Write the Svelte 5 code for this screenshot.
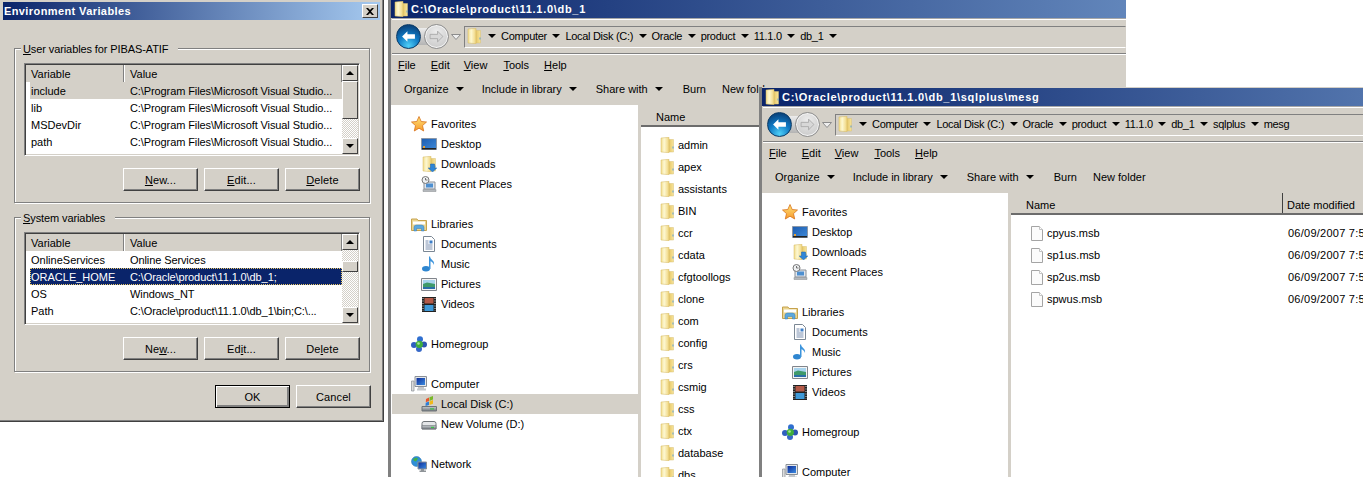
<script>
  // Three overlapping windows: the env vars dialog and two explorer windows
  const userVars = [
    ['include', 'C:\\Program Files\\Microsoft Visual Studio...'],
    ['lib', 'C:\\Program Files\\Microsoft Visual Studio...'],
    ['MSDevDir', 'C:\\Program Files\\Microsoft Visual Studio...'],
    ['path', 'C:\\Program Files\\Microsoft Visual Studio...'],
    ['temp', 'C:\\Users\\Administrator\\AppData\\Local\\Temp']
  ];
  const sysVars = [
    ['OnlineServices', 'Online Services'],
    ['ORACLE_HOME', 'C:\\Oracle\\product\\11.1.0\\db_1;'],
    ['OS', 'Windows_NT'],
    ['Path', 'C:\\Oracle\\product\\11.1.0\\db_1\\bin;C:\\...']
  ];

  const nav = [
    { label: 'Favorites', icon: 'star', top: true },
    { label: 'Desktop', icon: 'desktop' },
    { label: 'Downloads', icon: 'downloads' },
    { label: 'Recent Places', icon: 'recent' },
    { gap: true },
    { label: 'Libraries', icon: 'libraries', top: true },
    { label: 'Documents', icon: 'documents' },
    { label: 'Music', icon: 'music' },
    { label: 'Pictures', icon: 'pictures' },
    { label: 'Videos', icon: 'videos' },
    { gap: true },
    { label: 'Homegroup', icon: 'homegroup', top: true },
    { gap: true },
    { label: 'Computer', icon: 'computer', top: true },
    { label: 'Local Disk (C:)', icon: 'disk', active: true },
    { label: 'New Volume (D:)', icon: 'volume' },
    { gap: true },
    { label: 'Network', icon: 'network', top: true }
  ];

  const folders = ['admin', 'apex', 'assistants', 'BIN', 'ccr', 'cdata', 'cfgtoollogs', 'clone', 'com', 'config', 'crs', 'csmig', 'css', 'ctx', 'database', 'dbs'];
  const files = ['cpyus.msb', 'sp1us.msb', 'sp2us.msb', 'spwus.msb'];
</script>

{#snippet icon(name)}
  <svg class="icon" viewBox="0 0 16 16" width="16" height="16">
    {#if name === 'folder' || name === 'downloads'}
      <path d="M10 2.500h4.500V15H10z" fill="url(#fold2)" stroke="#d8c074" stroke-width=".5" />
      <path d="M2 1 10 .3v15.400L2 15z" fill="url(#fold)" stroke="#d4b862" stroke-width=".5" />
      <path d="M13.500 9.500h1v2h-1z" fill="#5b9fd8" />
      {#if name === 'downloads'}
        <path d="M9.500 8h4v4h2.300L11.500 16 7.200 12h2.300z" fill="#2f86d8" stroke="#1a5ea8" stroke-width=".5" />
      {/if}
    {:else if name === 'file'}
      <path d="M2.500 1.500h8l3 3v11h-11z" fill="#fbfbfb" stroke="#a4a4a4" />
      <path d="M10.500 1.500v3h3" fill="#fff" stroke="#c4c4c4" />
    {:else if name === 'star'}
      <path d="M8 .5l2.200 5 5.300.5-4 3.600 1.200 5.400L8 12.200 3.300 15l1.200-5.400-4-3.600 5.300-.5z" fill="url(#star)" stroke="#d8721c" stroke-width=".8" />
    {:else if name === 'desktop'}
      <path d="M.5 2.500h15v11H.5z" fill="url(#screen)" stroke="#8a97a8" />
      <path d="M1 12h14v1.500H1z" fill="#222" />
      <path d="M2 10h2v2H2z" fill="#e8a030" />
    {:else if name === 'recent'}
      <path d="M3 6h11v7H3z" fill="#dfe6ee" stroke="#8a8f96" />
      <path d="M5 7.500h7v4H5z" fill="#4d8fd0" />
      <path d="M2 13.500h13v2H2z" fill="#b4b8bc" stroke="#85888c" stroke-width=".5" />
      <circle cx="4.500" cy="4" r="3.500" fill="#eef0f2" stroke="#777" />
      <path d="M4.500 2v2h2" fill="none" stroke="#555" stroke-width=".8" />
    {:else if name === 'libraries'}
      <path d="M.5 3V14.500h15V4.500H7L6 3z" fill="#ead591" stroke="#c6a24c" />
      <path d="M2 5.500h12v3H2z" fill="#fff" />
      <path d="M3 15v-3.500q0-2.500 2.500-2.500h5q2.500 0 2.500 2.500V15h-2.500v-2.500h-5V15z" fill="#5ba8de" stroke="#3a7db8" stroke-width=".5" />
    {:else if name === 'documents'}
      <path d="M2.500.5h8l3 3v12h-11z" fill="#fff" stroke="#7b8794" />
      <path d="M4.500 5h3M4.500 7h3M4.500 9h7M4.500 11h7M4.500 13h7" stroke="#7a8fb0" />
      <path d="M8.500 4.500h3v3h-3z" fill="#3f7fc8" />
    {:else if name === 'music'}
      <ellipse cx="5" cy="12.800" rx="4" ry="2.700" fill="#2f86d0" />
      <path d="M8 13V1l1-1c0 4 5 4 4 9-.8-3-2.800-3.500-3.500-3.800V13z" fill="#3c94dc" />
    {:else if name === 'pictures'}
      <path d="M.5 2.500h15v12H.5z" fill="#f4f4f4" stroke="#80858c" />
      <path d="M2 4h12v4H2z" fill="#a8d4ee" />
      <path d="M2 8l4-1.500L14 8v3H2z" fill="#3f9a6a" />
      <path d="M2 11h12v2H2z" fill="#2a6fa8" />
    {:else if name === 'videos'}
      <path d="M1 1h14v15H1z" fill="#222" />
      <path d="M3.500 2h9v5.500h-9z" fill="#b45a48" />
      <path d="M3.500 9h9v6h-9z" fill="#3f9ad8" />
      <path d="M2 2v13M14 2v13" stroke="#ddd" stroke-dasharray="1 1.500" />
    {:else if name === 'homegroup'}
      <circle cx="3" cy="9" r="3" fill="#2f5fc0" />
      <circle cx="9" cy="3.200" r="3" fill="#2f6fd0" />
      <circle cx="13" cy="8.500" r="3" fill="#2c55b0" />
      <circle cx="8" cy="13" r="3" fill="#3668c8" />
      <circle cx="8.300" cy="8.300" r="3.600" fill="#3fae3c" />
      <circle cx="7.500" cy="7.500" r="1.300" fill="#a8e49a" />
    {:else if name === 'computer'}
      <path d="M4 .5h11.500v10H4z" fill="#e4e8ec" stroke="#8a8f96" />
      <path d="M5.500 2h8.500v7H5.500z" fill="url(#blue)" />
      <path d="M7 11h6v1.500h2v2H6v-2h1z" fill="#c4c8cc" />
      <path d="M.5 5h2.500v10H.5z" fill="#dcdcdc" stroke="#8a8f96" stroke-width=".7" />
    {:else if name === 'disk'}
      <path d="M1 10.500h14.500v4.500H1z" fill="url(#drive)" stroke="#6f7478" />
      <path d="M9 12.300h4v1.200H9z" fill="#38c048" />
      <path d="M5 3l3-1.500V5L4.800 6.300z" fill="#e8562c" />
      <path d="M8.500 1.300 12 0v3.500L8.500 5z" fill="#78b828" />
      <path d="M4.700 6.800 8 5.500V9L4.500 10z" fill="#2e7ed8" />
      <path d="M8.500 5.500 12 4v3.800L8.500 9z" fill="#f0b818" />
    {:else if name === 'volume'}
      <path d="M1 7.500q0-2 2-2h10q2 0 2 2V13H1z" fill="#e4e6e8" stroke="#6f7478" />
      <path d="M1 9.500h14V13H1z" fill="url(#drive)" stroke="#6f7478" stroke-width=".6" />
      <path d="M10 10.800h3v1.200h-3z" fill="#38c048" />
    {:else if name === 'network'}
      <circle cx="5.500" cy="5.500" r="5" fill="#2f8fd8" stroke="#1e6cb0" stroke-width=".5" />
      <path d="M2 3l3-1.500 2 1-2 3-2-.5zM7 7l2 1-1 2-1.500-1z" fill="#42b04a" />
      <path d="M7 6h8.500v7H7z" fill="url(#blue)" stroke="#8a8f96" />
      <path d="M10 13h3v1.500h2V16H8.500v-1.500H10z" fill="#8f9498" />
    {/if}
  </svg>
{/snippet}

{#snippet variableList(rows, selected, hovered, thumbClass)}
  <div class="list">
    <div class="list-main">
      <div class="list-head">
        <span class="hcell col1">Variable</span>
        <span class="hcell col2">Value</span>
      </div>
      {#each rows as row, i}
        <div class="vrow" class:sel={i === selected} class:hov={i === hovered}>
          <span class="vname">{row[0]}</span>
          <span class="vval">{row[1]}</span>
        </div>
      {/each}
    </div>
    <div class="sbar">
      <button class="sbtn"><i class="tri up"></i></button>
      <div class="strack"><div class="thumb {thumbClass}"></div></div>
      <button class="sbtn"><i class="tri dn"></i></button>
    </div>
  </div>
{/snippet}

{#snippet navButton(ch)}
  <span class="nav-orb {ch}">
    <svg viewBox="0 0 14 12" width="15" height="13">
      <path d="M6 1 1 6l5 5V8h7V4H6z" fill={ch === 'back' ? '#fff' : '#d8d8d8'} stroke={ch === 'back' ? 'none' : '#a0a0a0'} stroke-width=".7" transform={ch === 'back' ? '' : 'matrix(-1 0 0 1 14 0)'} />
    </svg>
  </span>
{/snippet}

{#snippet explorer(cls, title, crumbs, content)}
  <section class="win {cls}">
    <header class="win-title">
      <span class="title-ico">{@render icon('folder')}</span>
      <b>{title}</b>
    </header>
    <div class="addr-row">
      <div class="nav-pair">
        {@render navButton('back')}
        {@render navButton('fwd')}
      </div>
      <svg class="hist" viewBox="0 0 10 6" width="10" height="6"><path d="M.5.500h9L5 5.500z" fill="#eee" stroke="#8c8c8c" /></svg>
      <div class="addr">
        <span class="addr-ico">{@render icon('folder')}</span>
        {#each crumbs as c}
          <i class="tri dn crumb-arrow"></i><span class="crumb">{c}</span>
        {/each}
      </div>
    </div>
    <nav class="menu">
      <span><u>F</u>ile</span><span><u>E</u>dit</span><span class="view"><u>V</u>iew</span><span><u>T</u>ools</span><span><u>H</u>elp</span>
    </nav>
    <div class="tools">
      <span class="tool org">Organize<i class="tri dn"></i></span>
      <span class="tool">Include in library<i class="tri dn"></i></span>
      <span class="tool">Share with<i class="tri dn"></i></span>
      <span class="tool burn">Burn</span>
      <span class="tool">New folder</span>
    </div>
    <div class="panes">
      <aside class="navpane">
        {#each nav as item}
          {#if item.gap}
            <div class="navgap"></div>
          {:else}
            <div class="navrow" class:top={item.top} class:active={item.active}>
              {@render icon(item.icon)}<span>{item.label}</span>
            </div>
          {/if}
        {/each}
      </aside>
      <div class="files">
        <div class="file-head">
          <span class="fh-name">Name</span>
          {#if content[0].date}<span class="fh-date">Date modified</span>{/if}
        </div>
        <div class="file-list">
          {#each content as item}
            <div class="frow">
              {@render icon(item.icon)}
              <span class="fname">{item.name}</span>
              {#if item.date}<span class="fdate">{item.date}</span>{/if}
            </div>
          {/each}
        </div>
      </div>
    </div>
  </section>
{/snippet}

<svg class="defs" width="0" height="0">
  <defs>
    <linearGradient id="fold" x1="0" x2="1" y1="0" y2="0"><stop offset="0" stop-color="#f2dc8c" /><stop offset=".4" stop-color="#fdf8d2" /><stop offset="1" stop-color="#efd47c" /></linearGradient>
    <linearGradient id="fold2" x1="0" x2="1" y1="0" y2="0"><stop offset="0" stop-color="#e8c868" /><stop offset="1" stop-color="#f6e49c" /></linearGradient>
    <linearGradient id="star" x1="0" x2="0" y1="0" y2="1"><stop offset="0" stop-color="#ffe47a" /><stop offset="1" stop-color="#f79a2c" /></linearGradient>
    <linearGradient id="screen" x1="0" x2="1" y1="0" y2="1"><stop offset="0" stop-color="#1c5cb0" /><stop offset="1" stop-color="#3f8ad8" /></linearGradient>
    <linearGradient id="blue" x1="0" x2="1" y1="0" y2="1"><stop offset="0" stop-color="#0c2a98" /><stop offset="1" stop-color="#3c8ce0" /></linearGradient>
    <linearGradient id="drive" x1="0" x2="0" y1="0" y2="1"><stop offset="0" stop-color="#c8ccd0" /><stop offset="1" stop-color="#70767c" /></linearGradient>
  </defs>
</svg>

<main class="desktop">
  <section class="dialog">
    <header class="dlg-title">
      <b>Environment Variables</b>
      <button class="close" aria-label="Close">
        <svg viewBox="0 0 8 7" width="8" height="7"><path d="M0 0h2l2 2 2-2h2L5 3.500 8 7H6L4 5 2 7H0l3-3.500z" fill="#000" /></svg>
      </button>
    </header>
    <div class="group first">
      <span class="legend"><u>U</u>ser variables for PIBAS-ATIF</span>
      {@render variableList(userVars, -1, 0, 'thumb-user')}
      <div class="btns">
        <button class="btn"><u>N</u>ew...</button>
        <button class="btn"><u>E</u>dit...</button>
        <button class="btn"><u>D</u>elete</button>
      </div>
    </div>
    <div class="group second">
      <span class="legend"><u>S</u>ystem variables</span>
      {@render variableList(sysVars, 1, -1, 'thumb-sys')}
      <div class="btns">
        <button class="btn">Ne<u>w</u>...</button>
        <button class="btn">Ed<u>i</u>t...</button>
        <button class="btn">De<u>l</u>ete</button>
      </div>
    </div>
    <div class="dlg-actions">
      <button class="btn default">OK</button>
      <button class="btn">Cancel</button>
    </div>
  </section>

  {@render explorer('w1', 'C:\\Oracle\\product\\11.1.0\\db_1', ['Computer', 'Local Disk (C:)', 'Oracle', 'product', '11.1.0', 'db_1', ''], folders.map((name) => ({ name, icon: 'folder' })))}
  {@render explorer('w2', 'C:\\Oracle\\product\\11.1.0\\db_1\\sqlplus\\mesg', ['Computer', 'Local Disk (C:)', 'Oracle', 'product', '11.1.0', 'db_1', 'sqlplus', 'mesg'], files.map((name) => ({ name, icon: 'file', date: '06/09/2007 7:50 AM' })))}
</main>

<style>
  :global(body) {
    margin: 0;
    background: #fff;
    overflow: hidden;
  }

  .defs {
    position: absolute;
  }

  .desktop {
    position: relative;
    width: 1363px;
    height: 477px;
    overflow: hidden;
    font: 11px "Liberation Sans", Arial, sans-serif;
    color: #000;
  }

  .icon {
    display: block;
    flex: none;
  }

  button {
    font: inherit;
    color: inherit;
    padding: 0;
    margin: 0;
  }

  .tri {
    display: inline-block;
    width: 0;
    height: 0;
    border-style: solid;
    border-color: transparent;
  }

  .tri.dn {
    border-width: 4px 4px 0;
    border-top-color: #000;
  }

  .tri.up {
    border-width: 0 4px 4px;
    border-bottom-color: #000;
  }

  /* Dialog */
  .dialog {
    position: absolute;
    left: 0;
    top: 0;
    width: 384px;
    height: 422px;
    box-sizing: border-box;
    background: #d4d0c8;
    border-right: 1px solid #404040;
    border-bottom: 1px solid #404040;
    box-shadow: inset -1px -1px 0 #808080;
    padding: 2px 3px 0 3px;
  }

  .dlg-title {
    height: 18px;
    background: linear-gradient(90deg, #0a246a, #a6caf0);
    color: #fff;
    display: flex;
    align-items: center;
    justify-content: space-between;
    padding: 0 2px 0 1px;
    letter-spacing: 0.4px;
  }

  .close {
    width: 16px;
    height: 14px;
    background: #d4d0c8;
    border: 1px solid;
    border-color: #fff #404040 #404040 #fff;
    display: flex;
    align-items: center;
    justify-content: center;
  }

  .group {
    margin: 0 0 0 11px;
    padding: 0 9px;
    width: 356px;
    box-sizing: border-box;
    border: 1px solid #808080;
    box-shadow: 1px 1px 0 #fff, inset 1px 1px 0 #fff;
    position: relative;
  }

  .group.first {
    margin-top: 28px;
    height: 155px;
  }

  .group.second {
    margin-top: 14px;
    height: 155px;
  }

  .legend {
    position: absolute;
    top: -7px;
    left: 6px;
    padding: 0 10px 0 2px;
    background: #d4d0c8;
    line-height: 14px;
    letter-spacing: -0.1px;
  }

  .list {
    margin-top: 14px;
    height: 93px;
    box-sizing: border-box;
    background: #fff;
    border: 1px solid;
    border-color: #808080 #fff #fff #808080;
    box-shadow: inset 1px 1px 0 #404040, inset -1px -1px 0 #d4d0c8;
    padding: 1px;
    display: flex;
    overflow: hidden;
  }

  .list-main {
    flex: 1;
    min-width: 0;
    overflow: hidden;
  }

  .list-head {
    display: flex;
    height: 17px;
    background: #d4d0c8;
  }

  .hcell {
    box-sizing: border-box;
    line-height: 18px;
    height: 17px;
    padding-left: 5px;
    border-right: 1px solid #808080;
  }

  .col1 {
    width: 98px;
    box-shadow: 1px 0 0 #fff;
  }

  .col2 {
    flex: 1;
    padding-left: 6px;
  }

  .vrow {
    height: 17px;
    line-height: 19px;
    margin-left: 4px;
    display: flex;
    box-sizing: border-box;
    white-space: nowrap;
  }

  .vname {
    width: 100px;
    padding-left: 1px;
    box-sizing: border-box;
    flex: none;
  }

  .vval {
    letter-spacing: -0.1px;
  }

  .vrow.hov {
    background: #d4d0c8;
  }

  .vrow.sel {
    background: #0a246a;
    color: #fff;
    outline: 1px dotted #e8c868;
    outline-offset: -1px;
  }

  .sbar {
    width: 16px;
    flex: none;
    display: flex;
    flex-direction: column;
    background: repeating-conic-gradient(#fff 0 25%, #d4d0c8 0 50%) 0 0 / 2px 2px;
  }

  .sbtn {
    height: 16px;
    flex: none;
    box-sizing: border-box;
    background: #d4d0c8;
    border: 1px solid;
    border-color: #fff #404040 #404040 #fff;
    display: flex;
    align-items: center;
    justify-content: center;
  }

  .strack {
    flex: 1;
  }

  .thumb {
    box-sizing: border-box;
    background: #d4d0c8;
    border: 1px solid;
    border-color: #fff #404040 #404040 #fff;
  }

  .thumb-user {
    height: 38px;
  }

  .thumb-sys {
    height: 11px;
    margin-top: 11px;
  }

  .btns {
    display: flex;
    justify-content: flex-end;
    gap: 6px;
    margin-top: 12px;
  }

  .btn {
    width: 75px;
    height: 23px;
    box-sizing: border-box;
    background: #d4d0c8;
    border: 1px solid;
    border-color: #fff #404040 #404040 #fff;
    box-shadow: inset -1px -1px 0 #808080;
    text-align: center;
    letter-spacing: 0.1px;
  }

  .btn.default {
    outline: 1px solid #000;
    outline-offset: -1px;
    border-color: #000;
    box-shadow: inset 1px 1px 0 #fff, inset -2px -2px 0 #808080;
  }

  .dlg-actions {
    display: flex;
    justify-content: flex-end;
    gap: 6px;
    margin: 13px 9px 0 0;
  }

  /* Explorer windows */
  .win {
    position: absolute;
    box-sizing: border-box;
    background: #d4d0c8;
    border-left: 3px solid #808080;
    display: flex;
    flex-direction: column;
    overflow: hidden;
    padding-top: 1px;
  }

  .w1 {
    left: 388px;
    top: -1px;
    width: 738px;
    height: 478px;
  }

  .w2 {
    left: 759px;
    top: 87px;
    width: 700px;
    height: 390px;
  }

  .win-title {
    height: 18px;
    flex: none;
    display: flex;
    align-items: center;
    background: linear-gradient(90deg, #0a246a 0, #6286bb 738px);
    color: #fff;
    letter-spacing: 0.7px;
  }

  .title-ico {
    margin: 0 2px 0 2px;
  }

  .addr-row {
    height: 35px;
    flex: none;
    box-sizing: border-box;
    display: flex;
    align-items: center;
    padding: 0 0 0 4px;
    margin: 1px 0 0 1px;
    border-top: 1px solid #fff;
    border-bottom: 1px solid #808080;
    box-shadow: 0 1px 0 #fff, 0 -1px 0 #a8a8a8;
    gap: 2px;
  }

  .nav-pair {
    display: flex;
    gap: 3px;
    background: linear-gradient(#ececec, #b4b4b4) center / 32px 17px no-repeat;
  }

  .nav-orb {
    width: 25px;
    height: 25px;
    box-sizing: border-box;
    border-radius: 50%;
    display: flex;
    align-items: center;
    justify-content: center;
    flex: none;
  }

  .nav-orb.back {
    background: radial-gradient(circle at 50% 90%, #4fd0f8 0, #0f7ac4 45%, #0a4a86 80%, #06335e 100%);
    border: 1px solid #0a3a66;
  }

  .nav-orb.fwd {
    background: radial-gradient(circle at 50% 30%, #ececec, #c4c4c4);
    border: 1px solid #8e8e8e;
    box-shadow: inset 0 0 0 1px #f4f4f4;
  }

  .hist {
    flex: none;
  }

  .addr {
    flex: 1;
    height: 22px;
    box-sizing: border-box;
    margin-left: 1px;
    padding-bottom: 2px;
    border: 1px solid;
    border-color: #808080 transparent #fff #808080;
    display: flex;
    align-items: center;
    white-space: nowrap;
  }

  .addr-ico {
    width: 23px;
    flex: none;
    padding-left: 1px;
    box-sizing: border-box;
  }

  .crumb-arrow {
    border-width: 3px 3px 0;
    margin-right: 5px;
  }

  .crumb {
    margin-right: 5.5px;
    letter-spacing: -0.3px;
  }

  .menu {
    height: 21px;
    flex: none;
    box-sizing: border-box;
    padding: 1px 0 0 7px;
    display: flex;
    align-items: center;
    gap: 15px;
  }

  .view {
    margin-left: -1px;
    margin-right: 1px;
  }

  .tools {
    height: 30px;
    flex: none;
    box-sizing: border-box;
    padding: 0 0 3px 13px;
    display: flex;
    align-items: center;
    gap: 19px;
  }

  .tool {
    display: flex;
    align-items: center;
    gap: 7px;
  }

  .org {
    margin-right: -1px;
  }

  .burn {
    margin-left: 1px;
    margin-right: -3px;
  }

  .panes {
    flex: 1;
    min-height: 0;
    display: flex;
    background: #fff;
  }

  .navpane {
    width: 250px;
    flex: none;
    padding-top: 9px;
    box-sizing: border-box;
    border-right: 3px solid #d4d0c8;
  }

  .w2 .navpane {
    width: 249px;
  }

  .navgap {
    height: 20px;
  }

  .navrow {
    height: 20px;
    padding-left: 29px;
    display: flex;
    align-items: center;
    gap: 4px;
    margin-left: 1px;
  }

  .navrow.top {
    padding-left: 19px;
  }

  .navrow.active {
    background: #d4d0c8;
  }

  .files {
    flex: 1;
    min-width: 0;
  }

  .file-head {
    height: 22px;
    box-sizing: border-box;
    background: #d4d0c8;
    border-bottom: 2px solid #6c6c6c;
    display: flex;
    line-height: 24px;
  }

  .fh-name {
    width: 272px;
    flex: none;
    box-sizing: border-box;
    padding-left: 15px;
    height: 20px;
    border-right: 1px solid #404040;
  }

  .fh-date {
    padding-left: 4px;
  }

  .file-list {
    padding-top: 7px;
  }

  .frow {
    height: 22px;
    display: flex;
    align-items: center;
    padding-left: 18px;
    gap: 3px;
  }

  .w2 .frow {
    gap: 2px;
  }

  .fname {
    width: 239px;
    flex: none;
  }

  .fdate {
    white-space: nowrap;
    letter-spacing: 0.25px;
  }
</style>
